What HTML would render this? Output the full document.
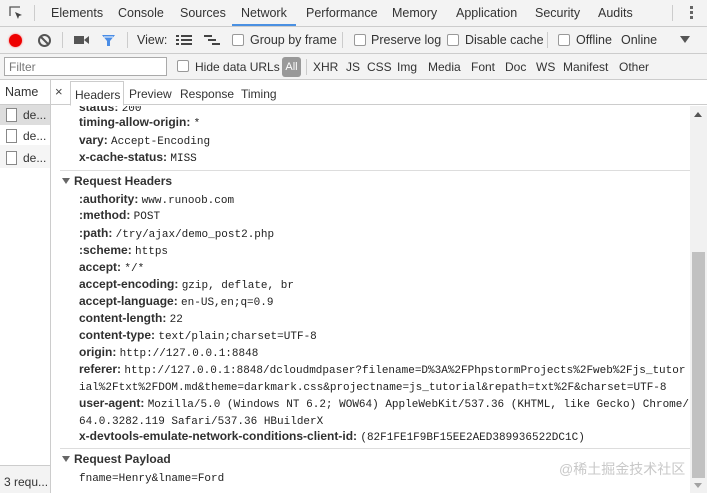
<!DOCTYPE html>
<html><head><meta charset="utf-8"><style>
*{margin:0;padding:0;box-sizing:border-box}
body{width:707px;height:493px;overflow:hidden;background:#fff;font-family:"Liberation Sans","Noto Sans CJK SC",sans-serif;font-size:12px;color:#333;position:relative}
.a{position:absolute;white-space:nowrap}
.bar{position:absolute;left:0;width:707px;background:#f3f3f3;border-bottom:1px solid #ccc}
.t{position:absolute;top:6px;color:#333;font-size:12.5px}
.f{font-size:12px}
.cb{position:absolute;width:12px;height:12px;border:1px solid #999;border-radius:2px;background:#fff}
.sep{position:absolute;width:1px;background:#ccc}
.r{position:absolute;left:79px;height:16px;line-height:16px;white-space:nowrap;font-size:12px}
.r b{color:#303030;font-weight:bold}
.r span{font-family:"Liberation Mono",monospace;font-size:11px;color:#222}
.h{position:absolute;left:62px;height:16px;line-height:16px;font-weight:bold;color:#333;font-size:12px;white-space:nowrap}
.h:before{content:"";display:inline-block;border-left:4px solid transparent;border-right:4px solid transparent;border-top:6px solid #666;margin-right:4px;vertical-align:1px}
.hl{position:absolute;left:60px;width:630px;height:1px;background:#ddd}
</style></head><body>
<div class="bar" style="top:0;height:27px"></div>
<svg class="a" style="left:9px;top:6px" width="14" height="14"><path d="M1 10V1h10" fill="none" stroke="#555" stroke-width="1.3"/><path d="M6 6l7 3-3 1-1 3z" fill="#444"/></svg>
<div class="sep" style="left:34px;top:5px;height:16px"></div>
<div class="t" style="left:51px">Elements</div>
<div class="t" style="left:118px">Console</div>
<div class="t" style="left:180px">Sources</div>
<div class="t" style="left:241px">Network</div>
<div class="a" style="left:232px;top:24px;width:64px;height:2px;background:#4a90e2"></div>
<div class="t" style="left:306px">Performance</div>
<div class="t" style="left:392px">Memory</div>
<div class="t" style="left:456px">Application</div>
<div class="t" style="left:535px">Security</div>
<div class="t" style="left:598px">Audits</div>
<div class="sep" style="left:672px;top:5px;height:16px"></div>
<div class="a" style="left:690px;top:6px;width:3px;line-height:5px;font-size:0"><div style="width:3px;height:3px;background:#666;margin-bottom:2px"></div><div style="width:3px;height:3px;background:#666;margin-bottom:2px"></div><div style="width:3px;height:3px;background:#666"></div></div>

<div class="bar" style="top:27px;height:27px"></div>
<div class="a" style="left:9px;top:34px;width:13px;height:13px;border-radius:50%;background:#e00;box-shadow:0 0 2px #f66"></div>
<svg class="a" style="left:37px;top:33px" width="15" height="15"><circle cx="7.5" cy="7.5" r="5.5" fill="none" stroke="#555" stroke-width="2"/><path d="M3.5 3.5l8 8" stroke="#555" stroke-width="2"/></svg>
<div class="sep" style="left:62px;top:32px;height:16px"></div>
<svg class="a" style="left:74px;top:35px" width="15" height="10"><rect x="0" y="1" width="10" height="8" fill="#555"/><path d="M10 5l5-4v8z" fill="#555"/></svg>
<svg class="a" style="left:101px;top:34px" width="15" height="13"><path d="M1 1h13l-5 6v5h-3v-5z" fill="#4a8de6"/><path d="M3 3h9" stroke="#fff" stroke-width="1"/></svg>
<div class="sep" style="left:127px;top:32px;height:16px"></div>
<div class="t" style="left:137px;top:33px">View:</div>
<svg class="a" style="left:176px;top:35px" width="16" height="11"><path d="M0 1h3M5 1h11M0 5h3M5 5h11M0 9h3M5 9h11" stroke="#444" stroke-width="2"/></svg>
<svg class="a" style="left:204px;top:35px" width="16" height="11"><path d="M0 1h8M4 5h8M8 9h8" stroke="#444" stroke-width="2"/></svg>
<div class="cb" style="left:232px;top:34px"></div>
<div class="t" style="left:250px;top:33px">Group by frame</div>
<div class="sep" style="left:342px;top:32px;height:16px"></div>
<div class="cb" style="left:354px;top:34px"></div>
<div class="t" style="left:371px;top:33px">Preserve log</div>
<div class="cb" style="left:447px;top:34px"></div>
<div class="t" style="left:465px;top:33px">Disable cache</div>
<div class="sep" style="left:547px;top:32px;height:16px"></div>
<div class="cb" style="left:558px;top:34px"></div>
<div class="t" style="left:576px;top:33px">Offline</div>
<div class="t" style="left:621px;top:33px">Online</div>
<div class="a" style="left:680px;top:36px;border-left:5px solid transparent;border-right:5px solid transparent;border-top:7px solid #555"></div>

<div class="bar" style="top:54px;height:26px"></div>
<div class="a" style="left:4px;top:57px;width:163px;height:19px;background:#fff;border:1px solid #aaa;padding:2px 4px;color:#777;font-size:12px">Filter</div>
<div class="cb" style="left:177px;top:60px"></div>
<div class="t f" style="left:195px;top:60px">Hide data URLs</div>
<div class="a" style="left:282px;top:57px;width:19px;height:20px;border-radius:3px;background:#999;color:#fff;font-size:11px;line-height:20px;text-align:center">All</div>
<div class="sep" style="left:306px;top:59px;height:16px"></div>
<div class="t f" style="left:313px;top:60px">XHR</div>
<div class="t f" style="left:346px;top:60px">JS</div>
<div class="t f" style="left:367px;top:60px">CSS</div>
<div class="t f" style="left:397px;top:60px">Img</div>
<div class="t f" style="left:428px;top:60px">Media</div>
<div class="t f" style="left:471px;top:60px">Font</div>
<div class="t f" style="left:505px;top:60px">Doc</div>
<div class="t f" style="left:536px;top:60px">WS</div>
<div class="t f" style="left:563px;top:60px">Manifest</div>
<div class="t f" style="left:619px;top:60px">Other</div>

<div class="a" style="left:50px;top:80px;width:1px;height:413px;background:#ccc"></div>
<div class="a" style="left:0;top:80px;width:50px;height:25px;border-bottom:1px solid #ccc;line-height:24px;padding-left:5px;font-size:12.5px">Name</div>
<div class="a" style="left:0;top:105px;width:50px;height:20px;background:#ddd"></div>
<div class="a" style="left:0;top:145px;width:50px;height:23px;background:#f5f5f5"></div>
<div class="a" style="left:6px;top:108px;width:11px;height:14px;border:1px solid #888;background:#fff"></div><div class="a" style="left:23px;top:108px;font-size:12px">de...</div>
<div class="a" style="left:6px;top:129px;width:11px;height:14px;border:1px solid #888;background:#fff"></div><div class="a" style="left:23px;top:129px;font-size:12px">de...</div>
<div class="a" style="left:6px;top:151px;width:11px;height:14px;border:1px solid #888;background:#fff"></div><div class="a" style="left:23px;top:151px;font-size:12px">de...</div>
<div class="a" style="left:0;top:465px;width:50px;height:28px;border-top:1px solid #ccc;background:#f3f3f3;padding:9px 0 0 4px;font-size:12px">3 requ...</div>

<div class="a" style="left:51px;top:80px;width:656px;height:25px;border-bottom:1px solid #ccc;background:#fff"></div>
<div class="a" style="left:55px;top:84px;font-size:13px;color:#444">×</div>
<div class="a" style="left:70px;top:81px;width:54px;height:25px;border:1px solid #ccc;border-bottom:1px solid #fff;background:#fff;padding:6px 0 0 4px;font-size:12px">Headers</div>
<div class="t f" style="left:129px;top:87px">Preview</div>
<div class="t f" style="left:180px;top:87px">Response</div>
<div class="t f" style="left:241px;top:87px">Timing</div>

<div class="a" style="left:51px;top:106px;width:640px;height:387px;overflow:hidden">
<div style="position:absolute;left:-51px;top:-106px;width:707px;height:493px">
<div class="r" style="top:99px"><b>status:</b> <span>200</span></div>
</div></div>
<div class="r" style="top:114px"><b>timing-allow-origin:</b> <span>*</span></div>
<div class="r" style="top:132px"><b>vary:</b> <span>Accept-Encoding</span></div>
<div class="r" style="top:149px"><b>x-cache-status:</b> <span>MISS</span></div>
<div class="hl" style="top:170px"></div>
<div class="h" style="top:173px">Request Headers</div>
<div class="r" style="top:191px"><b>:authority:</b> <span>www.runoob.com</span></div>
<div class="r" style="top:207px"><b>:method:</b> <span>POST</span></div>
<div class="r" style="top:225px"><b>:path:</b> <span>/try/ajax/demo_post2.php</span></div>
<div class="r" style="top:242px"><b>:scheme:</b> <span>https</span></div>
<div class="r" style="top:259px"><b>accept:</b> <span>*/*</span></div>
<div class="r" style="top:276px"><b>accept-encoding:</b> <span>gzip, deflate, br</span></div>
<div class="r" style="top:293px"><b>accept-language:</b> <span>en-US,en;q=0.9</span></div>
<div class="r" style="top:310px"><b>content-length:</b> <span>22</span></div>
<div class="r" style="top:327px"><b>content-type:</b> <span>text/plain;charset=UTF-8</span></div>
<div class="r" style="top:344px"><b>origin:</b> <span>http://127.0.0.1:8848</span></div>
<div class="r" style="top:361px"><b>referer:</b> <span>http://127.0.0.1:8848/dcloudmdpaser?filename=D%3A%2FPhpstormProjects%2Fweb%2Fjs_tutor</span></div>
<div class="r" style="top:378px"><span>ial%2Ftxt%2FDOM.md&amp;theme=darkmark.css&amp;projectname=js_tutorial&amp;repath=txt%2F&amp;charset=UTF-8</span></div>
<div class="r" style="top:395px"><b>user-agent:</b> <span>Mozilla/5.0 (Windows NT 6.2; WOW64) AppleWebKit/537.36 (KHTML, like Gecko) Chrome/</span></div>
<div class="r" style="top:412px"><span>64.0.3282.119 Safari/537.36 HBuilderX</span></div>
<div class="r" style="top:428px"><b>x-devtools-emulate-network-conditions-client-id:</b> <span>(82F1FE1F9BF15EE2AED389936522DC1C)</span></div>
<div class="hl" style="top:448px"></div>
<div class="h" style="top:451px">Request Payload</div>
<div class="r" style="top:469px"><span>fname=Henry&amp;lname=Ford</span></div>
<div class="a" style="left:559px;top:459px;font-size:14px;color:#c8c8c8">@稀土掘金技术社区</div>

<div class="a" style="left:690px;top:106px;width:17px;height:387px;background:#f1f1f1"></div>
<div class="a" style="left:694px;top:112px;border-left:4px solid transparent;border-right:4px solid transparent;border-bottom:5px solid #555"></div>
<div class="a" style="left:692px;top:252px;width:13px;height:226px;background:#c1c1c1"></div>
<div class="a" style="left:694px;top:483px;border-left:4px solid transparent;border-right:4px solid transparent;border-top:5px solid #a3a3a3"></div>
</body></html>
